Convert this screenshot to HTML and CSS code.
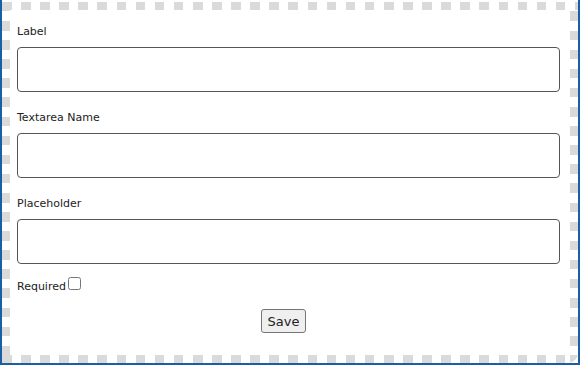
FILE: index.html
```html
<!DOCTYPE html>
<html lang="en">
<head>
<meta charset="UTF-8">
<meta name="viewport" content="width=device-width, initial-scale=1.0">
<title>Textarea Settings</title>
<link rel="stylesheet" href="styles.css">
</head>
<body>

<div class="frame">
  <form class="editor" onsubmit="return false;">
    <div class="field">
      <label for="fLabel">Label</label>
      <input id="fLabel" type="text">
    </div>
    <div class="field">
      <label for="fName">Textarea Name</label>
      <input id="fName" type="text">
    </div>
    <div class="field">
      <label for="fPlaceholder">Placeholder</label>
      <input id="fPlaceholder" type="text">
    </div>
    <div class="check">
      <label for="fRequired">Required</label><input id="fRequired" type="checkbox">
    </div>
    <div class="actions">
      <button type="submit">Save</button>
    </div>
  </form>
</div>

</body>
</html>
```

FILE: styles.css
```css
body {
  font-family: "DejaVu Sans", sans-serif;
  margin: 0;
  padding: 0;
  background-color: #fff;
  color: #222;
}

.frame {
  width: 576px;
  height: 361px;
  padding-top: 2px;
  border: 2px solid #1b5ea6;
  border-top: none;
}

/* dashed edge drawn with gradients so the dash rhythm matches */
.editor {
  height: 100%;
  box-sizing: border-box;
  border: 8px solid transparent;
  border-bottom-right-radius: 10px;
  padding: 15px 20px 0 7px;
  background:
    linear-gradient(#fff, #fff) padding-box,
    repeating-linear-gradient(90deg, #dadada 0 9.5px, transparent 9.5px 19.1px) top left / 100% 8px no-repeat border-box,
    repeating-linear-gradient(90deg, #dadada 0 9.5px, transparent 9.5px 19.1px) bottom left / 100% 8px no-repeat border-box,
    repeating-linear-gradient(180deg, #dadada 0 9.5px, transparent 9.5px 19.1px) top left / 8px 100% no-repeat border-box,
    repeating-linear-gradient(180deg, transparent 0 9.5px, #dadada 9.5px 19.1px) top right / 8px 100% no-repeat border-box;
}

.field label {
  display: block;
  font-size: 11px;
  line-height: 13px;
  margin-bottom: 9px;
}

.field input {
  display: block;
  width: 100%;
  height: 35px;
  padding: 4px;
  border: 1px solid #555;
  border-radius: 4px;
  margin: 0;
}

.field + .field {
  margin-top: 19px;
}

.check {
  margin-top: 13px;
  font-size: 11px;
  line-height: 13px;
}

.check input {
  width: 13px;
  height: 13px;
  margin: 0 0 0 2px;
}

.actions {
  margin-top: 16px;
  text-align: center;
}

.actions button {
  font-family: "DejaVu Sans", sans-serif;
  font-size: 13px;
  height: 24px;
  padding: 0 6px;
  color: #222;
  background-color: #efefef;
  border: 1px solid #767676;
  border-radius: 3px;
}
```
